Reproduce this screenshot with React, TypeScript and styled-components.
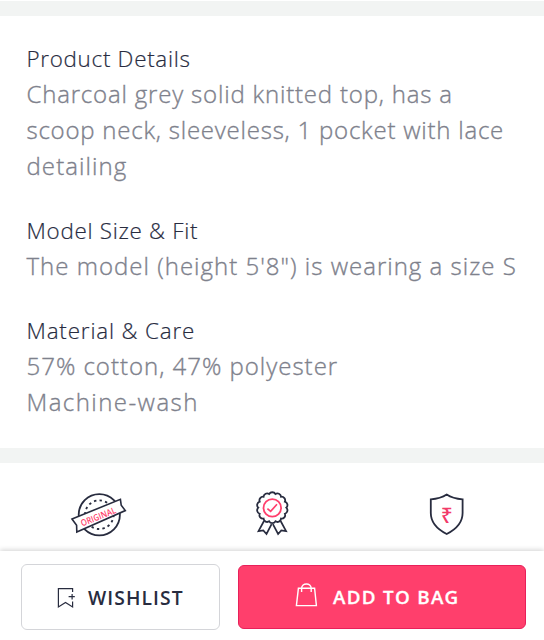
import styled, { createGlobalStyle } from 'styled-components';

const ink = '#282c3f';
const pink = '#ff3f6c';

const GlobalStyle = createGlobalStyle`
  *, *::before, *::after { box-sizing: border-box; }
  body { margin: 0; background: #fff; font-family: 'Open Sans', 'Noto Sans', sans-serif; }
`;

const Page = styled.main`
  display: flex;
  flex-direction: column;
  width: 544px;
  height: 640px;
  padding-top: 1px;
  overflow: hidden;
  background: #fff;
`;

const Divider = styled.div`
  flex: none;
  height: 15px;
  background: #f2f4f3;
`;

const Details = styled.section`
  display: flex;
  flex: none;
  flex-direction: column;
  gap: 29px;
  height: 432px;
  padding: 25px 0 0 26.5px;
`;

const Group = styled.div`
  display: flex;
  flex-direction: column;
`;

const Heading = styled.h2<{ $tracking: number }>`
  margin: 0;
  color: #282c3f;
  font-size: 22.4px;
  font-weight: 300;
  line-height: 35px;
  letter-spacing: ${({ $tracking }) => $tracking}px;
  white-space: nowrap;
  -webkit-text-stroke: 0.2px currentColor;
`;

const Line = styled.p<{ $tracking: number }>`
  margin: 0;
  color: #7e818c;
  font-size: 24px;
  font-weight: 300;
  line-height: 36px;
  letter-spacing: ${({ $tracking }) => $tracking}px;
  white-space: nowrap;
  -webkit-text-stroke: 0.35px currentColor;
`;

const Assurances = styled.section`
  display: grid;
  flex: 1;
  grid-template-columns: 60px 60px 60px;
  column-gap: 114px;
  padding: 22px 0 0 69px;
`;

const Emblem = styled.svg`
  display: block;
  width: 60px;
  height: 60px;
  fill: none;
  stroke: ${ink};
  stroke-width: 1.8;
`;

const StampText = styled.text`
  fill: ${pink};
  stroke: none;
  font-size: 9px;
  font-weight: 600;
`;

const Rupee = styled.text`
  fill: #f23a69;
  stroke: none;
  font-size: 21px;
  font-weight: 500;
`;

const ActionBar = styled.footer`
  position: relative;
  display: flex;
  flex: none;
  gap: 18px;
  height: 89px;
  padding: 13px 0 0 21px;
  background: #fff;
  box-shadow: 0 -1px 5px rgba(0, 0, 0, 0.18);
`;

const Button = styled.button<{ $primary?: boolean }>`
  display: flex;
  align-items: center;
  margin: ${({ $primary }) => ($primary ? '1px 0 0' : '0')};
  width: ${({ $primary }) => ($primary ? 288 : 199)}px;
  height: ${({ $primary }) => ($primary ? 64 : 66)}px;
  padding: ${({ $primary }) => ($primary ? '0 0 0 56px' : '0 0 0 34px')};
  border: ${({ $primary }) => ($primary ? '1px solid #e8205a' : '1.5px solid #d4d5d9')};
  border-radius: 6px;
  background: ${({ $primary }) => ($primary ? pink : '#fff')};
  color: ${({ $primary }) => ($primary ? '#fff' : ink)};
  font-family: inherit;
  font-size: ${({ $primary }) => ($primary ? 18.8 : 19.3)}px;
  font-weight: 600;
  line-height: 26px;
  letter-spacing: ${({ $primary }) => ($primary ? 1.3 : 1.08)}px;
  white-space: nowrap;
  -webkit-text-stroke: ${({ $primary }) => ($primary ? '0.3px currentColor' : '0')};
`;

const ButtonLabel = styled.span<{ $drop?: number }>`
  padding-top: ${({ $drop = 0 }) => $drop}px;
`;

const ButtonIcon = styled.svg<{ $gap: number; $lift?: number }>`
  flex: none;
  width: 24px;
  height: 26px;
  margin: 0 ${({ $gap }) => $gap}px ${({ $lift = 0 }) => $lift}px 0;
  fill: none;
  stroke: currentColor;
`;

/** Closed outline made of equal outward bumps around a centre. */
function scallop(cx: number, cy: number, r: number, count: number) {
  const at = (i: number) => {
    const a = ((i - 0.5) / count) * Math.PI * 2 - Math.PI / 2;
    return `${(cx + r * Math.cos(a)).toFixed(2)} ${(cy + r * Math.sin(a)).toFixed(2)}`;
  };
  let d = `M${at(0)}`;
  for (let i = 1; i <= count; i++) d += `A3.6 3.6 0 0 1 ${at(i)}`;
  return `${d}Z`;
}

type Text = [text: string, tracking: number];
const groups: { title: Text; lines: Text[] }[] = [
  {
    title: ['Product Details', 0.71],
    lines: [
      ['Charcoal grey solid knitted top, has a', 0.81],
      ['scoop neck, sleeveless, 1 pocket with lace', 0.77],
      ['detailing', 1.08],
    ],
  },
  {
    title: ['Model Size & Fit', 0.71],
    lines: [['The model (height 5\'8") is wearing a size S', 1.01]],
  },
  {
    title: ['Material & Care', 0.84],
    lines: [
      ['57% cotton, 47% polyester', 0.99],
      ['Machine-wash', 1.45],
    ],
  },
];

function OriginalStamp() {
  return (
    <Emblem viewBox="0 0 60 60" aria-label="Original">
      <circle cx="30.3" cy="29.7" r="20.6" />
      <circle cx="30.3" cy="29.7" r="14.3" strokeDasharray="2.4 3.2" />
      <path d="M3 34 L51.4 14.3 L52.2 20.2 L56.3 25.6 L7.8 47 L7.6 40.2 Z" fill="#fff" strokeWidth="1.6" />
      <StampText transform="translate(13.3 41.6) rotate(-22)" textLength="37" lengthAdjust="spacingAndGlyphs">
        ORIGINAL
      </StampText>
    </Emblem>
  );
}

function QualityRosette() {
  return (
    <Emblem viewBox="0 0 60 60" aria-label="Quality">
      <path d="M21 36 L15.5 46.2 L20.3 45.5 L23.5 49 L28.6 39.2 M37.6 36 L43.1 46.2 L38.3 45.5 L35.1 49 L29.9 39.2" strokeWidth="1.7" />
      <path d={scallop(29.3, 22.7, 14, 14)} fill="#fff" />
      <circle cx="29.3" cy="22.9" r="8.8" stroke={pink} strokeWidth="1.8" />
      <path d="M24.4 23.6 L27.6 26.4 L34 19.3" stroke={pink} strokeWidth="1.7" />
    </Emblem>
  );
}

function PriceShield() {
  return (
    <Emblem viewBox="0 0 60 60" aria-label="Price">
      <path d="M29.7 9.6 C25.4 12.5 19.5 14 13.8 14.4 V28 C13.8 37.3 20.4 44.3 29.7 49 C39 44.3 45.6 37.3 45.6 28 V14.4 C39.9 14 34 12.5 29.7 9.6 Z" />
      <Rupee x="29.8" y="38" textAnchor="middle">₹</Rupee>
    </Emblem>
  );
}

export default function App() {
  return (
    <>
      <GlobalStyle />
      <Page>
        <Divider />
        <Details>
          {groups.map(({ title, lines }) => (
            <Group key={title[0]}>
              <Heading $tracking={title[1]}>{title[0]}</Heading>
              {lines.map(([text, tracking]) => (
                <Line key={text} $tracking={tracking}>{text}</Line>
              ))}
            </Group>
          ))}
        </Details>
        <Divider />
        <Assurances>
          <OriginalStamp />
          <QualityRosette />
          <PriceShield />
        </Assurances>
        <ActionBar>
          <Button>
            <ButtonIcon viewBox="0 0 24 26" $gap={8}>
              <path d="M16.6 8 V4.7 H2.4 V22.9 L9.5 18.5 L16.6 22.9 V17.5 M12.6 12.7 H18.8 M16.1 10 V15.5" strokeWidth="1.2" />
            </ButtonIcon>
            <ButtonLabel $drop={2}>WISHLIST</ButtonLabel>
          </Button>
          <Button $primary>
            <ButtonIcon viewBox="0 0 24 26" $gap={14} $lift={6}>
              <path d="M3.4 7.3 H19.6 L21.4 24.6 H1.4 Z M6.6 11 V7.5 C6.6 1.5 16.2 1.5 16.2 7.5 V11" strokeWidth="1.4" />
            </ButtonIcon>
            <ButtonLabel>ADD TO BAG</ButtonLabel>
          </Button>
        </ActionBar>
      </Page>
    </>
  );
}
